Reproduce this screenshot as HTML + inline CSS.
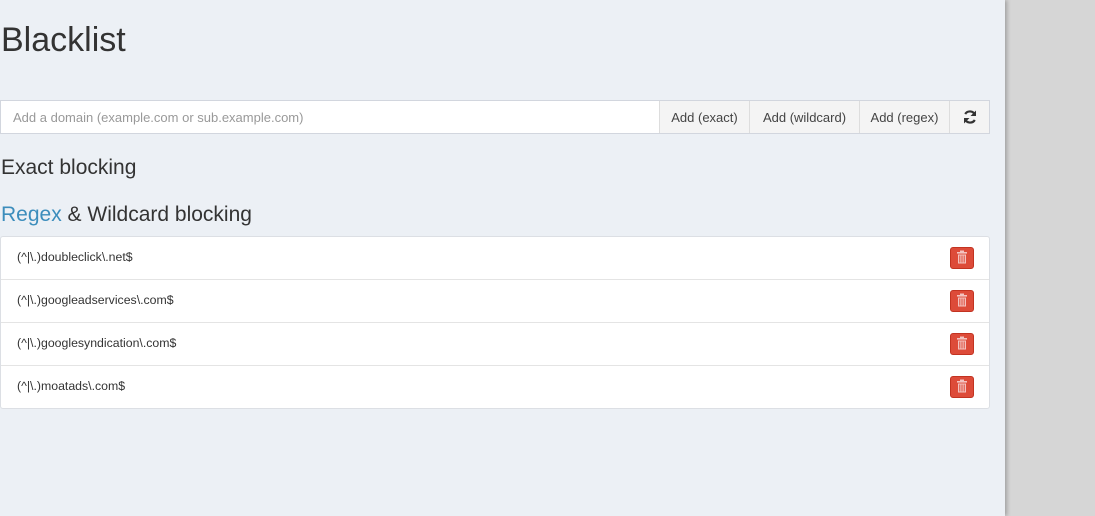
<!DOCTYPE html>
<html><head><meta charset="utf-8"><style>
*{box-sizing:border-box;margin:0;padding:0}
body{width:1095px;height:516px;overflow:hidden;background:#d6d6d6;font-family:"Liberation Sans",sans-serif;color:#333;position:relative}
.main{position:absolute;left:0;top:0;width:1005px;height:516px;background:#ecf0f5;box-shadow:2px 0 4px rgba(0,0,0,.25)}
h1{position:absolute;left:1px;top:21px;font-size:34px;font-weight:normal;color:#333}
.ig{position:absolute;left:0;top:100px;width:990px;height:34px;display:flex;border:1px solid #d2d6de;background:#fff}
.ig .in{flex:1;font-size:13px;color:#999;padding:9px 12px;background:#fff}
.ig .b{background:#f4f4f4;border-left:1px solid #ddd;font-size:13px;color:#444;padding:9px 0;text-align:center}
h2{position:absolute;left:1px;font-size:21px;font-weight:normal;color:#333}
h2 span{color:#3c8dbc}
.list{position:absolute;left:0;top:236px;width:990px;height:173px;background:#fff;border:1px solid #dcdfe4;border-radius:3px}
.row{height:43px;border-bottom:1px solid #e4e4e4;position:relative;font-size:12.3px;padding:13px 0 0 16px;color:#333}
.row:last-child{border-bottom:none}
.del{position:absolute;left:949px;top:10px;width:24px;height:22px;background:#dd4b39;border-radius:3px;border:1px solid #c23321}
</style></head><body>
<div class="main">
<h1>Blacklist</h1>
<div class="ig"><div class="in">Add a domain (example.com or sub.example.com)</div>
<div class="b" style="width:90px">Add (exact)</div>
<div class="b" style="width:110px">Add (wildcard)</div>
<div class="b" style="width:90px">Add (regex)</div>
<div class="b" style="width:40px;padding:8px 0"><svg width="16" height="16" viewBox="0 0 16 16"><path d="M13 6A5.5 5.5 0 0 0 3.2 5" stroke="#333" stroke-width="2.2" fill="none"/><path d="M14 1.5V7H8.5z" fill="#333"/><path d="M3 10a5.5 5.5 0 0 0 9.8 1" stroke="#333" stroke-width="2.2" fill="none"/><path d="M2 14.5V9H7.5z" fill="#333"/></svg></div>
</div>
<h2 style="top:156px">Exact blocking</h2>
<h2 style="top:203px"><span>Regex</span> &amp; Wildcard blocking</h2>
<div class="list">
<div class="row">(^|\.)doubleclick\.net$<div class="del"><svg width="22" height="20" viewBox="0 0 22 20"><g fill="#f3c3c0"><rect x="6" y="4" width="10" height="1.6"/><rect x="9" y="2.5" width="4" height="1.6"/><path d="M7 6.5h8v9H7z M8.3 7.5v7h1v-7z M10.5 7.5v7h1v-7z M12.7 7.5v7h1v-7z" fill-rule="evenodd"/></g></svg></div></div>
<div class="row">(^|\.)googleadservices\.com$<div class="del"><svg width="22" height="20" viewBox="0 0 22 20"><g fill="#f3c3c0"><rect x="6" y="4" width="10" height="1.6"/><rect x="9" y="2.5" width="4" height="1.6"/><path d="M7 6.5h8v9H7z M8.3 7.5v7h1v-7z M10.5 7.5v7h1v-7z M12.7 7.5v7h1v-7z" fill-rule="evenodd"/></g></svg></div></div>
<div class="row">(^|\.)googlesyndication\.com$<div class="del"><svg width="22" height="20" viewBox="0 0 22 20"><g fill="#f3c3c0"><rect x="6" y="4" width="10" height="1.6"/><rect x="9" y="2.5" width="4" height="1.6"/><path d="M7 6.5h8v9H7z M8.3 7.5v7h1v-7z M10.5 7.5v7h1v-7z M12.7 7.5v7h1v-7z" fill-rule="evenodd"/></g></svg></div></div>
<div class="row">(^|\.)moatads\.com$<div class="del"><svg width="22" height="20" viewBox="0 0 22 20"><g fill="#f3c3c0"><rect x="6" y="4" width="10" height="1.6"/><rect x="9" y="2.5" width="4" height="1.6"/><path d="M7 6.5h8v9H7z M8.3 7.5v7h1v-7z M10.5 7.5v7h1v-7z M12.7 7.5v7h1v-7z" fill-rule="evenodd"/></g></svg></div></div>
</div>
</div>
</body></html>
